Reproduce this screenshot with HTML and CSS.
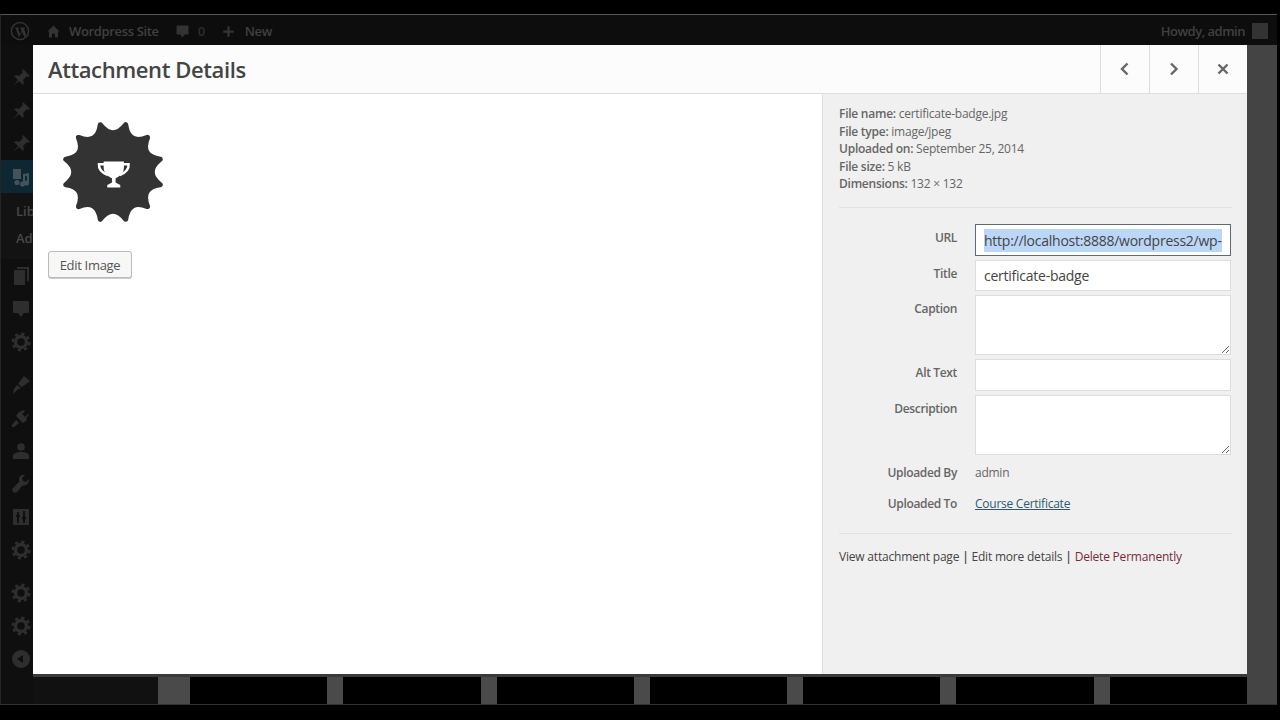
FILE: index.html
```html
<!DOCTYPE html>
<html>
<head>
  <title>Attachment Details</title>
  <link rel="stylesheet" href="styles.css">
</head>
<body>
  <svg class="sprites" width="0" height="0">
    <symbol id="i-pin" viewBox="0 0 20 20">
      <path d="M12 1l7 7-2 1-1-1-4 4c1 2 1 3 0 5L8 13l-6 5 5-6-4-4c2-1 3-1 5 0l4-4-1-1z"/>
    </symbol>
    <symbol id="i-gear" viewBox="0 0 20 20">
      <circle cx="10" cy="10" r="5.5" fill="none" stroke="currentColor" stroke-width="3.4"/>
      <circle cx="10" cy="10" r="8.2" fill="none" stroke="currentColor" stroke-width="2.6" stroke-dasharray="3.2 3.24"/>
    </symbol>
    <symbol id="i-media" viewBox="0 0 20 20">
      <path d="M2 2h8v10H2zM12 7l6-1v10a2.500 2.500 0 1 1-2-2.400V9l-2 .3V17a2.500 2.500 0 1 1-2-2.400z"/>
      <circle cx="6" cy="15.500" r="2.600"/>
    </symbol>
    <symbol id="i-pages" viewBox="0 0 20 20">
      <path d="M6 1h12v14h-2V3H6zM3 4h11v15H3z"/>
    </symbol>
    <symbol id="i-comment" viewBox="0 0 20 20">
      <path d="M3 2h14a1 1 0 0 1 1 1v10a1 1 0 0 1-1 1h-4l-3 4-3-4H3a1 1 0 0 1-1-1V3a1 1 0 0 1 1-1z"/>
    </symbol>
    <symbol id="i-brush" viewBox="0 0 20 20">
      <path d="M13 1l6 5-8 6-4-3zM6 10l4 3-4 2-4 4 1-5z"/>
    </symbol>
    <symbol id="i-plugin" viewBox="0 0 20 20">
      <path d="M13 2l1 1-3 3 3 3 3-3 1 1-3 3 1 2-4 3-7-7 3-4zM5 12l3 3-5 4-2 0 0-2z"/>
    </symbol>
    <symbol id="i-user" viewBox="0 0 20 20">
      <circle cx="10" cy="6" r="3.800"/>
      <path d="M2 18v-3c0-3 4-4 8-4s8 1 8 4v3z"/>
    </symbol>
    <symbol id="i-wrench" viewBox="0 0 20 20">
      <path d="M18 5l-3 3-3-1-1-3 3-3c-3-1-6 1-6 4 0 1 0 2 .5 2.500L2 14c-1 1-1 3 0 4s3 1 4 0l5.500-6.500c3 1 7-2 6.500-6.500z"/>
    </symbol>
    <symbol id="i-sliders" viewBox="0 0 20 20">
      <path fill-rule="evenodd" d="M2 2h16v16H2zM6 5v3H5v2h1v6h2v-6h1V8H8V5zM12 4v6h-1v2h1v4h2v-4h1v-2h-1V4z"/>
    </symbol>
    <symbol id="i-collapse" viewBox="0 0 20 20">
      <path fill-rule="evenodd" d="M10 1a9 9 0 1 1 0 18 9 9 0 0 1 0-18zM12 6l-6 4 6 4z"/>
    </symbol>
  </svg>

  <div class="screen">
    <div class="admin-bar">
      <div class="bar-left">
        <svg class="bar-logo" viewBox="0 0 20 20">
          <circle cx="10" cy="10" r="8.600" fill="none" stroke="currentColor" stroke-width="1.500"/>
          <path d="M4 6.500h5v1H8l2.500 7 1.500-4-1-3h-1v-1h5v1h-1l2 6.500-1.500 2.500-3-7-2.500 7-4-10.500H4z"/>
        </svg>
        <svg class="bar-icon" viewBox="0 0 20 20"><path d="M10 2l8 8h-2v8h-4v-5H8v5H4v-8H2z"/></svg>
        <span class="bar-site">Wordpress Site</span>
        <svg class="bar-icon bar-comment" viewBox="0 0 20 20"><use href="#i-comment"/></svg>
        <span class="bar-count">0</span>
        <svg class="bar-icon bar-plus" viewBox="0 0 20 20"><path d="M8.500 3h3v5.500H17v3h-5.500V17h-3v-5.500H3v-3h5.500z"/></svg>
        <span>New</span>
      </div>
      <div class="bar-right">
        <span>Howdy, admin</span>
        <span class="bar-avatar"></span>
      </div>
    </div>

    <div class="desk">
      <nav class="side-menu">
        <div class="menu-item"><svg><use href="#i-pin"/></svg></div>
        <div class="menu-item"><svg><use href="#i-pin"/></svg></div>
        <div class="menu-item"><svg><use href="#i-pin"/></svg></div>
        <div class="menu-item active"><svg><use href="#i-media"/></svg></div>
        <div class="submenu">
          <div class="sub-item">Library</div>
          <div class="sub-item">Add New</div>
        </div>
        <div class="menu-item"><svg><use href="#i-pages"/></svg></div>
        <div class="menu-item"><svg><use href="#i-comment"/></svg></div>
        <div class="menu-item"><svg><use href="#i-gear"/></svg></div>
        <div class="menu-sep"></div>
        <div class="menu-item"><svg><use href="#i-brush"/></svg></div>
        <div class="menu-item"><svg><use href="#i-plugin"/></svg></div>
        <div class="menu-item"><svg><use href="#i-user"/></svg></div>
        <div class="menu-item"><svg><use href="#i-wrench"/></svg></div>
        <div class="menu-item"><svg><use href="#i-sliders"/></svg></div>
        <div class="menu-item"><svg><use href="#i-gear"/></svg></div>
        <div class="menu-sep"></div>
        <div class="menu-item"><svg><use href="#i-gear"/></svg></div>
        <div class="menu-item"><svg><use href="#i-gear"/></svg></div>
        <div class="menu-item"><svg><use href="#i-collapse"/></svg></div>
      </nav>

      <div class="centre">
        <div class="modal">
          <header class="modal-head">
            <h1>Attachment Details</h1>
            <div class="modal-nav">
              <button class="nav-btn" type="button">
                <svg viewBox="0 0 16 16"><path d="M10.500 2.500L5 8l5.500 5.500"/></svg>
              </button>
              <button class="nav-btn" type="button">
                <svg viewBox="0 0 16 16"><path d="M5 2.500L10.500 8 5 13.500"/></svg>
              </button>
              <button class="nav-btn" type="button">
                <svg viewBox="0 0 16 16"><path d="M3.500 3.500l9 9M12.500 3.500l-9 9"/></svg>
              </button>
            </div>
          </header>

          <div class="modal-body">
            <section class="preview">
              <svg class="badge" viewBox="-52 -52 104 104">
                <path class="badge-star" d="M12.200,-45.400Q15,-26 33.200,-33.200Q26,-15 45.400,-12.200Q30,0 45.400,12.200Q26,15 33.200,33.200Q15,26 12.200,45.400Q0,30 -12.200,45.400Q-15,26 -33.200,33.200Q-26,15 -45.400,12.200Q-30,0 -45.400,-12.200Q-26,-15 -33.200,-33.200Q-15,-26 -12.200,-45.400Q0,-30 12.200,-45.400Z"/>
                <path class="cup-handle" d="M-8,-7.500H-13.500C-14,-2 -10,1 -5,3M9.500,-7.500H15C15.500,-2 11.500,1 6.500,3"/>
                <path class="cup" d="M-9,-10H10.500V-4C10.500,2 5,5 2.500,6V10L7,12.500V15H-5.500V12.500L-1,10V6C-3.500,5 -9,2 -9,-4Z"/>
              </svg>
              <button class="edit-btn" type="button">Edit Image</button>
            </section>

            <aside class="details">
              <div class="file-info">
                <div><b>File name:</b> certificate-badge.jpg</div>
                <div><b>File type:</b> image/jpeg</div>
                <div><b>Uploaded on:</b> September 25, 2014</div>
                <div><b>File size:</b> 5 kB</div>
                <div><b>Dimensions:</b> 132 × 132</div>
              </div>

              <div class="fields">
                <label class="field-label">URL</label>
                <div class="field url-field"><span class="selected">http://localhost:8888/wordpress2/wp-</span></div>

                <label class="field-label" for="title">Title</label>
                <input class="field title-field" id="title" type="text" value="certificate-badge">

                <label class="field-label" for="caption">Caption</label>
                <textarea class="field area-field" id="caption"></textarea>

                <label class="field-label" for="alt">Alt Text</label>
                <input class="field alt-field" id="alt" type="text">

                <label class="field-label" for="description">Description</label>
                <textarea class="field area-field" id="description"></textarea>

                <span class="field-label static-label">Uploaded By</span>
                <span class="static-value">admin</span>

                <span class="field-label static-label">Uploaded To</span>
                <span class="static-value"><a href="#">Course Certificate</a></span>
              </div>

              <div class="actions">
                <a href="#">View attachment page</a> <i>|</i>
                <a href="#">Edit more details</a> <i>|</i>
                <a href="#" class="delete">Delete Permanently</a>
              </div>
            </aside>
          </div>
        </div>

        <div class="shelf">
          <div class="shelf-lead"></div>
          <div class="shelf-bar first"></div>
          <div class="shelf-gap"></div>
          <div class="shelf-bar"></div>
          <div class="shelf-gap"></div>
          <div class="shelf-bar"></div>
          <div class="shelf-gap"></div>
          <div class="shelf-bar"></div>
          <div class="shelf-gap"></div>
          <div class="shelf-bar"></div>
          <div class="shelf-gap"></div>
          <div class="shelf-bar"></div>
          <div class="shelf-gap"></div>
          <div class="shelf-bar"></div>
          <div class="shelf-gap"></div>
        </div>
      </div>

      <div class="right-strip"></div>
    </div>
  </div>
</body>
</html>
```

FILE: styles.css
```css
body {
  margin: 0;
  height: 720px;
  overflow: hidden;
  background: #000;
  font-family: "Open Sans", sans-serif;
  font-size: 12px;
  color: #666;
}

.sprites {
  display: block;
  height: 0;
}

.screen {
  margin-top: 14px;
  width: 1277px;
  height: 691px;
  border-top: 1px solid #555;
  border-bottom: 1px solid #333;
  border-left: 1px solid #2a2222;
  box-sizing: border-box;
}

/* top admin bar */
.admin-bar {
  display: flex;
  justify-content: space-between;
  align-items: center;
  height: 30px;
  box-sizing: border-box;
  padding-top: 2px;
  background: #0d0d0d;
  color: #404040;
  font-size: 13px;
  font-weight: 600;
  letter-spacing: -0.35px;
}

.bar-left,
.bar-right {
  display: flex;
  align-items: center;
}

.bar-left svg {
  fill: currentColor;
  flex: none;
}

.bar-logo {
  width: 20px;
  height: 20px;
  margin-left: 9px;
  color: #333;
}

.bar-icon {
  width: 15px;
  height: 15px;
  color: #333;
}

.bar-left .bar-logo + .bar-icon {
  margin-left: 16px;
  margin-right: 8px;
}

.bar-left .bar-comment {
  margin-left: 16px;
  margin-right: 8px;
}

.bar-count {
  color: #2e2e2e;
}

.bar-left .bar-plus {
  margin-left: 16px;
  margin-right: 9px;
}

.bar-right {
  gap: 7px;
  margin-right: 9px;
  letter-spacing: -0.5px;
}

.bar-avatar {
  width: 16px;
  height: 16px;
  background: #333;
}

.desk {
  display: flex;
  height: 659px;
}

/* left menu, mostly hidden behind the modal */
.side-menu {
  width: 32px;
  flex: none;
  overflow: hidden;
  background: #0f0f0f;
  padding-top: 16px;
  box-sizing: border-box;
  color: #2e2e2e;
}

.menu-item {
  height: 33px;
  display: flex;
  align-items: center;
  padding-left: 10px;
}

.menu-item svg {
  width: 20px;
  height: 20px;
  fill: currentColor;
  flex: none;
}

.menu-item.active {
  background: #0d2833;
  color: #44525a;
}

.menu-sep {
  height: 10px;
}

.submenu {
  background: #131313;
  padding: 5px 0 7px;
}

.sub-item {
  height: 27px;
  line-height: 27px;
  padding-left: 15px;
  white-space: nowrap;
  font-size: 13px;
  font-weight: 600;
  color: #474747;
}

.centre {
  width: 1214px;
  flex: none;
}

.right-strip {
  flex: 1;
  background: #444;
}

/* modal */
.modal {
  height: 629px;
  display: flex;
  flex-direction: column;
  background: #fff;
}

.modal-head {
  display: flex;
  justify-content: space-between;
  height: 49px;
  flex: none;
  box-sizing: border-box;
  background: #fcfcfc;
  border-bottom: 1px solid #ddd;
}

.modal-head h1 {
  margin: 0;
  padding-left: 15px;
  font-size: 22px;
  font-weight: 600;
  line-height: 49px;
  letter-spacing: -0.4px;
  color: #444;
}

.modal-nav {
  display: flex;
}

.nav-btn {
  width: 49px;
  padding: 0;
  border: 0;
  border-left: 1px solid #ddd;
  background: transparent;
  display: flex;
  align-items: center;
  justify-content: center;
}

.nav-btn svg {
  width: 16px;
  height: 16px;
  fill: none;
  stroke: #666;
  stroke-width: 2.400;
}

.modal-body {
  display: flex;
  flex: 1;
  min-height: 0;
}

.preview {
  width: 789px;
  flex: none;
  padding: 24px 0 0 15px;
  box-sizing: border-box;
}

.badge {
  display: block;
  width: 108px;
  height: 108px;
  margin-left: 10.500px;
}

.badge-star {
  fill: #333;
  stroke: #333;
  stroke-width: 5;
  stroke-linejoin: round;
}

.cup {
  fill: #fff;
}

.cup-handle {
  fill: none;
  stroke: #fff;
  stroke-width: 2.400;
}

.edit-btn {
  display: block;
  width: 84px;
  height: 27px;
  margin-top: 25px;
  padding: 0;
  border: 1px solid #bbb;
  border-radius: 3px;
  background: #f7f7f7;
  box-shadow: 0 1px 0 #ccc;
  font-family: "Open Sans", sans-serif;
  font-size: 13px;
  letter-spacing: -0.3px;
  color: #555;
}

/* right column */
.details {
  flex: 1;
  background: #f0f0f0;
  border-left: 1px solid #ddd;
  padding: 11px 15px 0 16px;
  letter-spacing: -0.25px;
}

.file-info {
  line-height: 17.500px;
  padding-bottom: 14px;
  border-bottom: 1px solid #e2e2e2;
}

.file-info b {
  font-weight: 600;
}

.fields {
  display: grid;
  grid-template-columns: 118px 256px;
  column-gap: 18px;
  row-gap: 4px;
  margin-top: 16px;
  padding-bottom: 16px;
  border-bottom: 1px solid #e2e2e2;
}

.field-label {
  padding-top: 5.500px;
  line-height: 18px;
  text-align: right;
  font-weight: 600;
  letter-spacing: -0.35px;
}

.field {
  display: block;
  box-sizing: border-box;
  width: 100%;
  margin: 0;
  padding: 0 8px;
  border: 1px solid #ddd;
  border-radius: 0;
  background: #fff;
  font-family: "Open Sans", sans-serif;
  font-size: 14px;
  letter-spacing: -0.25px;
  color: #444;
  outline: none;
}

.url-field {
  height: 32px;
  line-height: 31px;
  border-color: #5b6b7a;
  white-space: nowrap;
  overflow: hidden;
}

.selected {
  background: #bcd6f7;
  padding: 2px 0;
}

.title-field {
  height: 31px;
}

.alt-field {
  height: 32px;
}

.area-field {
  height: 60px;
}

.static-label,
.static-value {
  height: 27px;
  line-height: 27px;
  padding-top: 0;
}

.static-value a {
  color: #2e5a70;
}

.actions {
  margin-top: 14px;
  line-height: 18px;
  letter-spacing: -0.2px;
}

.actions a {
  color: #444;
  text-decoration: none;
}

.actions i {
  font-style: normal;
  font-weight: 600;
  color: #444;
}

.actions .delete {
  color: #7a2a35;
}

/* strip of thumbnails below the modal */
.shelf {
  display: flex;
  height: 30px;
  border-top: 3px solid #3a3a3a;
  box-sizing: border-box;
  background: #000;
}

.shelf-lead {
  width: 125px;
  background: #111;
}

.shelf-bar {
  width: 16px;
  flex: none;
  background: #4a4a4a;
}

.shelf-bar.first {
  width: 32px;
}

.shelf-gap {
  flex: 1;
}
```
